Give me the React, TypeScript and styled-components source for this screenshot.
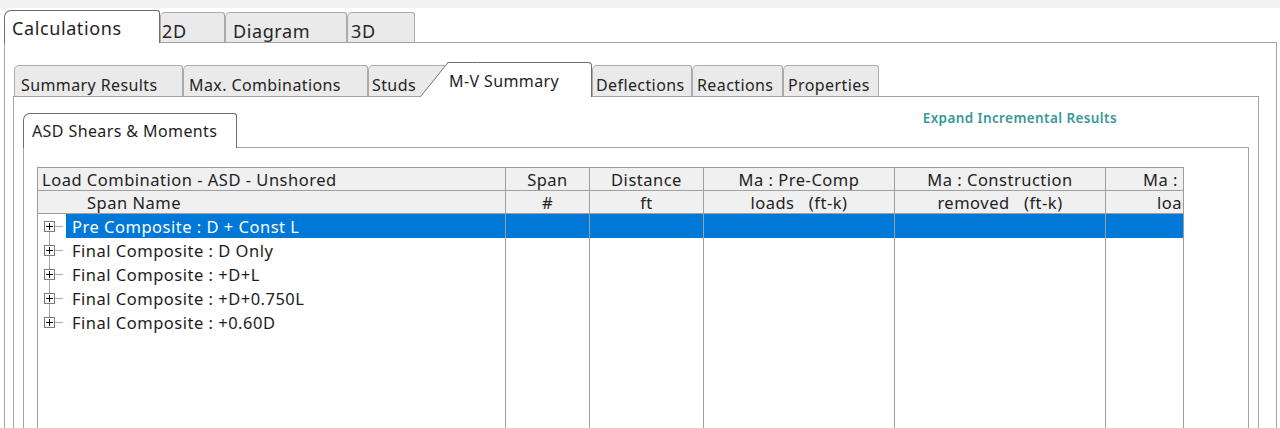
import React from "react";
import styled, { createGlobalStyle } from "styled-components";

const GlobalStyle = createGlobalStyle`
  html, body { margin: 0; padding: 0; background: #ffffff; }
  body { font-family: "Noto Sans", "Open Sans", "DejaVu Sans", sans-serif; color: #1c1c1c; }
  *, *::before, *::after { box-sizing: border-box; }
`;

const Page = styled.div`
  width: 1280px;
  height: 428px;
  overflow: hidden;
  background: #fff;
`;

const Frame = styled.div`
  height: 470px;
  display: flex;
  flex-direction: column;
`;

const TopBand = styled.div`
  flex: none;
  height: 8px;
  background: #f2f2f2;
`;

const TabStrip = styled.div<{ $h: number; $pl: number }>`
  flex: none;
  display: flex;
  align-items: flex-end;
  height: ${(p) => p.$h}px;
  padding-left: ${(p) => p.$pl}px;
`;

const Tab = styled.div<{ $active?: boolean; $w: number; $h: number; $pt: number; $pl: number; $fs: number; $ls?: number }>`
  flex: none;
  width: ${(p) => p.$w}px;
  height: ${(p) => p.$h + (p.$active ? 1 : 0)}px;
  margin-bottom: ${(p) => (p.$active ? -1 : 0)}px;
  padding: ${(p) => p.$pt}px 0 0 ${(p) => p.$pl}px;
  font-size: ${(p) => p.$fs}px;
  letter-spacing: ${(p) => p.$ls ?? 0.4}px;
  line-height: 1.2;
  white-space: nowrap;
  overflow: hidden;
  display: flex;
  align-items: center;
  position: relative;
  z-index: ${(p) => (p.$active ? 2 : 1)};
  background: ${(p) => (p.$active ? "#ffffff" : "#eaeaea")};
  border: 1px solid ${(p) => (p.$active ? "#6e6e6e" : "#ababab")};
  border-bottom: none;
  border-radius: ${(p) => (p.$active ? "7px 3px 0 0" : "5px 3px 0 0")};
  color: ${(p) => (p.$active ? "#1e1e1e" : "#252525")};
`;

const ClippedTab = styled(Tab)`
  clip-path: polygon(0 0, 79px 0, 52px 100%, 0 100%);
`;

const SlantTab = styled(Tab)`
  overflow: visible;
  border-left: none;
  border-top-left-radius: 0;
  border-top-right-radius: 4px;
  &::before {
    content: "";
    position: absolute;
    left: 0;
    top: -1px;
    width: 30px;
    height: calc(100% + 1px);
    background: #ffffff;
    border-left: 1px solid #6e6e6e;
    border-top: 1px solid #6e6e6e;
    transform-origin: top left;
    transform: skewX(-39deg);
  }
`;

const TabText = styled.span`
  position: relative;
  z-index: 1;
`;

const OuterPanel = styled.div`
  flex: 1;
  margin-left: 4px;
  width: 1273px;
  border: 1px solid #a3a3a3;
  display: flex;
  flex-direction: column;
  padding: 0 17px 0 8px;
`;

const MiddlePanel = styled.div`
  flex: 1;
  border: 1px solid #a3a3a3;
  display: flex;
  flex-direction: column;
  padding: 0 9px;
`;

const InnerHeader = styled.div`
  flex: none;
  height: 50px;
  display: flex;
  align-items: flex-end;
  justify-content: space-between;
`;

const ExpandLink = styled.span`
  align-self: flex-start;
  margin-top: 12px;
  margin-right: 132px;
  font-size: 13.5px;
  font-weight: 600;
  letter-spacing: 0.4px;
  line-height: 18px;
  color: #3a9994;
  white-space: nowrap;
`;

const InnerPanel = styled.div`
  flex: 1;
  border: 1px solid #a3a3a3;
  display: flex;
  flex-direction: column;
  padding: 19px 0 0 13px;
`;

const TableViewport = styled.div`
  flex: 1;
  width: 1147px;
  border: 1px solid #9c9c9c;
  overflow: hidden;
  background: #ffffff;
`;

const Grid = styled.div`
  display: grid;
  grid-template-columns: 468px 84px 114px 191px 211px 191px;
  width: max-content;
  font-size: 16.5px;
  letter-spacing: 0.5px;
  line-height: 1.2;
`;

const HeadCell = styled.div<{ $align?: "left" | "center"; $pl?: number }>`
  height: 23px;
  background: #f0f0f0;
  border-right: 1px solid #a0a0a0;
  border-bottom: 1px solid #a0a0a0;
  color: #222;
  display: flex;
  align-items: center;
  justify-content: ${(p) => (p.$align === "left" ? "flex-start" : "center")};
  padding-left: ${(p) => p.$pl ?? 0}px;
  padding-top: 1px;
  white-space: pre;
  overflow: hidden;
`;

const BodyCell = styled.div<{ $selected?: boolean }>`
  height: 24px;
  border-right: 1px solid #a0a0a0;
  background: ${(p) => (p.$selected ? "#0078d7" : "#ffffff")};
`;

const NameCell = styled.div`
  height: 24px;
  border-right: 1px solid #a0a0a0;
  display: flex;
  align-items: stretch;
`;

const FillerCell = styled.div`
  height: 300px;
  border-right: 1px solid #a0a0a0;
`;

const Gutter = styled.div<{ $pos: "first" | "mid" | "last" }>`
  position: relative;
  flex: none;
  width: 28px;
  display: flex;
  align-items: center;
  padding-left: 6px;
  &::before {
    content: "";
    position: absolute;
    left: 11px;
    top: ${(p) => (p.$pos === "first" ? "50%" : "0")};
    bottom: ${(p) => (p.$pos === "last" ? "50%" : "0")};
    border-left: 1px solid #a8a8a8;
  }
  &::after {
    content: "";
    position: absolute;
    left: 16px;
    width: 9px;
    top: 50%;
    border-top: 1px solid #a8a8a8;
  }
`;

const PlusBox = styled.div`
  position: relative;
  z-index: 1;
  width: 11px;
  height: 11px;
  border: 1px solid #7c7c7c;
  background: #ffffff;
  &::before {
    content: "";
    position: absolute;
    left: 1px;
    top: 4px;
    width: 7px;
    border-top: 1px solid #111;
  }
  &::after {
    content: "";
    position: absolute;
    left: 4px;
    top: 1px;
    height: 7px;
    border-left: 1px solid #111;
  }
`;

const RowLabel = styled.div<{ $selected?: boolean }>`
  flex: 1;
  display: flex;
  align-items: center;
  padding-left: 6px;
  padding-top: 1px;
  white-space: nowrap;
  background: ${(p) => (p.$selected ? "#0078d7" : "transparent")};
  color: ${(p) => (p.$selected ? "#ffffff" : "#1c1c1c")};
`;

const headRow1: { text: string; align?: "left" | "center"; pl?: number }[] = [
  { text: "Load Combination - ASD - Unshored", align: "left", pl: 4 },
  { text: "Span" },
  { text: "Distance" },
  { text: "Ma : Pre-Comp" },
  { text: "Ma : Construction" },
  { text: "Ma : Final", align: "left", pl: 37 },
];

const headRow2: { text: string; align?: "left" | "center"; pl?: number }[] = [
  { text: "Span Name", align: "left", pl: 49 },
  { text: "#" },
  { text: "ft" },
  { text: "loads   (ft-k)" },
  { text: "removed   (ft-k)" },
  { text: "loads   (ft-k)", align: "left", pl: 51 },
];

const rows = [
  "Pre Composite : D + Const L",
  "Final Composite : D Only",
  "Final Composite : +D+L",
  "Final Composite : +D+0.750L",
  "Final Composite : +0.60D",
];

export default function App() {
  return (
    <Page>
      <GlobalStyle />
      <Frame>
        <TopBand />
        <TabStrip $h={34} $pl={4}>
          <Tab $active $w={156} $h={32} $pt={4} $pl={7} $fs={18} $ls={0.6}>Calculations</Tab>
          <Tab $w={65} $h={30} $pt={9} $pl={1} $fs={18} $ls={0.6}>2D</Tab>
          <Tab $w={122} $h={30} $pt={9} $pl={7} $fs={18} $ls={0.6}>Diagram</Tab>
          <Tab $w={68} $h={30} $pt={9} $pl={3} $fs={18} $ls={0.6}>3D</Tab>
        </TabStrip>
        <OuterPanel>
          <TabStrip $h={53} $pl={1}>
            <Tab $w={169} $h={31} $pt={9} $pl={6} $fs={16}>Summary Results</Tab>
            <Tab $w={185} $h={31} $pt={9} $pl={5} $fs={16}>Max. Combinations</Tab>
            <ClippedTab $w={80} $h={31} $pt={9} $pl={3} $fs={16}>Studs</ClippedTab>
            <SlantTab $active $w={144} $h={34} $pt={3} $pl={1} $fs={16}>
              <TabText>M-V Summary</TabText>
            </SlantTab>
            <Tab $w={100} $h={31} $pt={9} $pl={3} $fs={16}>Deflections</Tab>
            <Tab $w={91} $h={31} $pt={9} $pl={4} $fs={16}>Reactions</Tab>
            <Tab $w={96} $h={31} $pt={9} $pl={4} $fs={16}>Properties</Tab>
          </TabStrip>
          <MiddlePanel>
            <InnerHeader>
              <Tab $active $w={214} $h={34} $pt={2} $pl={8} $fs={16}>ASD Shears &amp; Moments</Tab>
              <ExpandLink>Expand Incremental Results</ExpandLink>
            </InnerHeader>
            <InnerPanel>
              <TableViewport>
                <Grid>
                  {headRow1.map((c, i) => (
                    <HeadCell key={"h1" + i} $align={c.align} $pl={c.pl}>{c.text}</HeadCell>
                  ))}
                  {headRow2.map((c, i) => (
                    <HeadCell key={"h2" + i} $align={c.align} $pl={c.pl}>{c.text}</HeadCell>
                  ))}
                  {rows.map((r, ri) => {
                    const sel = ri === 0;
                    const pos = ri === 0 ? "first" : ri === rows.length - 1 ? "last" : "mid";
                    return (
                      <React.Fragment key={r}>
                        <NameCell>
                          <Gutter $pos={pos}>
                            <PlusBox />
                          </Gutter>
                          <RowLabel $selected={sel}>{r}</RowLabel>
                        </NameCell>
                        {[1, 2, 3, 4, 5].map((c) => (
                          <BodyCell key={c} $selected={sel} />
                        ))}
                      </React.Fragment>
                    );
                  })}
                  {[0, 1, 2, 3, 4, 5].map((c) => (
                    <FillerCell key={"f" + c} />
                  ))}
                </Grid>
              </TableViewport>
            </InnerPanel>
          </MiddlePanel>
        </OuterPanel>
      </Frame>
    </Page>
  );
}
